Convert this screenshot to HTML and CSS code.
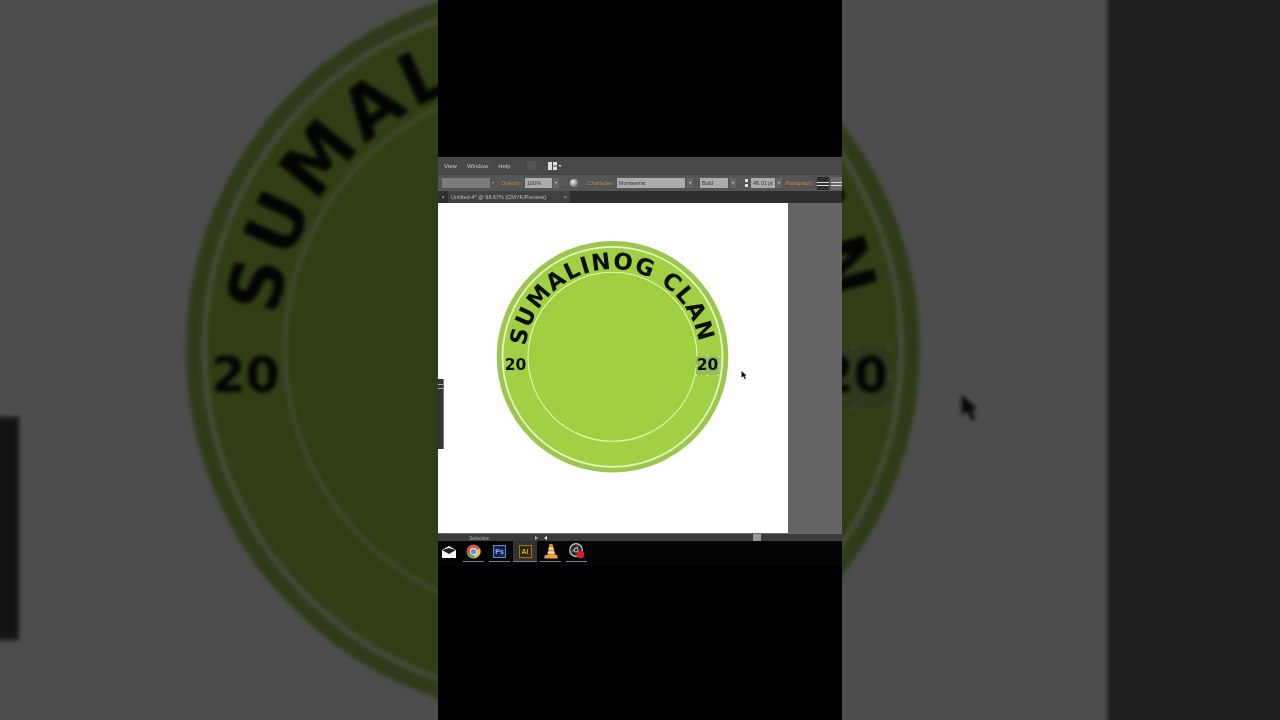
FILE: index.html

```html
<!DOCTYPE html>
<html>
<head>
<meta charset="utf-8">
<title>Sumalinog Clan logo</title>
<link rel="stylesheet" href="styles.css">
</head>
<body>

<!-- blurred, enlarged copy of the video behind it -->
<svg class="backdrop" viewBox="431.7 240.1 416.6 239.9" preserveAspectRatio="none">
  <rect x="430" y="240" width="357.5" height="240" fill="#fff"/>
  <rect x="787.5" y="240" width="62" height="240" fill="#646464"/>
  <rect x="430" y="378" width="14" height="70.500" fill="#434343"/>
  <use href="#art"/>
</svg>

<div class="frame">
  <div class="menubar">
    <span class="menu">View</span>
    <span class="menu">Window</span>
    <span class="menu">Help</span>
    <span class="ghost-btn"></span>
    <svg class="layout-icon" width="14" height="8" viewBox="0 0 14 8">
      <rect width="4" height="8" fill="#ddd"/>
      <rect x="5" width="4" height="3.500" fill="#ddd"/>
      <rect x="5" y="4.500" width="4" height="3.500" fill="#ddd"/>
      <path d="M10.500 3h3l-1.500 2z" fill="#ddd"/>
    </svg>
  </div>

  <div class="controlbar">
    <span class="field field-blank"></span>
    <span class="arrow arrow-dim"></span>
    <span class="label label-opacity">Opacity:</span>
    <span class="field field-opacity">100%</span>
    <span class="arrow"></span>
    <span class="globe"></span>
    <span class="label label-char">Character:</span>
    <span class="field field-font">Montserrat</span>
    <span class="arrow arrow-font"></span>
    <span class="field field-style">Bold</span>
    <span class="arrow arrow-style"></span>
    <span class="stepper"></span>
    <span class="field field-size">48.01 pt</span>
    <span class="arrow arrow-size"></span>
    <span class="label label-para">Paragraph:</span>
    <span class="align align-on"></span>
    <span class="align"></span>
  </div>

  <div class="tabbar">
    <span class="tab-x">&times;</span>
    <span class="tab">Untitled-4* @ 98.67% (CMYK/Preview)<span class="tab-close">&times;</span></span>
  </div>

  <div class="workspace">
    <div class="canvas">
      <svg class="art-svg" width="350" height="330" viewBox="438 203 350 330">
        <defs>
          <path id="arc" d="M525.65 346.1A87.500 87.500 0 0 1 698.7 341.6"/>
        </defs>
        <g id="art">
          <circle cx="612.5" cy="356.8" r="115.8" fill="#9cc650"/>
          <circle cx="612.5" cy="356.8" r="110" fill="#a2d045" stroke="#e6f5c4" stroke-width="1.800"/>
          <circle cx="612.5" cy="356.8" r="84.5" fill="#a0d042" stroke="#e4f6b8" stroke-width="1.100"/>
          <text class="arc-text"><textPath href="#arc" textLength="249">SUMALINOG CLAN</textPath></text>
          <rect x="696" y="356" width="23" height="19" fill="#95bb5e"/>
          <text class="year" x="515.5" y="370">20</text>
          <text class="year" x="707.5" y="370">20</text>
          <g fill="#e8f0dc">
            <circle cx="696.5" cy="356" r=".7"/><circle cx="707.5" cy="356" r=".7"/><circle cx="718.5" cy="356" r=".7"/>
            <circle cx="696.5" cy="365.5" r=".7"/><circle cx="718.5" cy="365.5" r=".7"/>
            <circle cx="696.5" cy="375" r=".7"/><circle cx="707.5" cy="375" r=".7"/><circle cx="718.5" cy="375" r=".7"/>
          </g>
          <path d="M741.5 371l5 4.400-2 .3 1.400 3-1.200.5-1.300-3-1.900 1.300z" fill="#111"/>
        </g>
      </svg>
      <div class="toolbox"><span></span><span></span></div>
    </div>
    <div class="pasteboard"></div>
  </div>

  <div class="statusbar">
    <span class="status-text">Selection</span>
    <span class="status-arrow status-arrow-r"></span>
    <span class="status-arrow status-arrow-l"></span>
    <span class="thumb"></span>
  </div>

  <div class="taskbar">
    <span class="task task-plain">
      <svg width="16" height="14" viewBox="0 0 16 14">
        <path d="M1 5L8 1l7 4v8H1z" fill="#fff"/>
        <path d="M1 5l7 4 7-4-7-2z" fill="#222"/>
      </svg>
    </span>
    <span class="task">
      <svg width="15" height="15" viewBox="0 0 16 16">
        <circle cx="8" cy="8" r="7.500" fill="#cf5a4c"/>
        <path d="M8 8L1.500 11.800A7.500 7.500 0 0 0 9 15.400z" fill="#62a763"/>
        <path d="M8 8l1 7.400A7.500 7.500 0 0 0 14.800 4.800z" fill="#e2c05a"/>
        <circle cx="8" cy="8" r="3.700" fill="#eee"/>
        <circle cx="8" cy="8" r="2.800" fill="#5f8fcf"/>
      </svg>
    </span>
    <span class="task"><span class="app-badge app-ps">Ps</span></span>
    <span class="task task-active"><span class="app-badge app-ai">Ai</span></span>
    <span class="task task-vlc">
      <svg width="14" height="16" viewBox="0 0 14 16">
        <path d="M5.500 1h3l3 11h-8z" fill="#ee8a1d"/>
        <path d="M4.900 4.500h4.200l.5 2h-5.200zM4 8.500h6l.5 2h-7z" fill="#f5e9d8"/>
        <path d="M1 12h12l1 3.500H0z" fill="#e8a24c"/>
      </svg>
    </span>
    <span class="task task-last">
      <svg width="16" height="16" viewBox="0 0 16 16">
        <circle cx="7" cy="7" r="6.300" fill="#2a2a2a" stroke="#ccc" stroke-width="1.200"/>
        <circle cx="7" cy="7" r="2" fill="none" stroke="#ccc"/>
        <path d="M2.500 9L6 6M8 3l1 2" stroke="#aaa"/>
        <circle cx="11.500" cy="11.500" r="3.800" fill="#d8202c"/>
      </svg>
    </span>
  </div>
</div>

</body>
</html>
```

FILE: styles.css

```css
html, body {
    margin: 0;
    height: 100%;
    overflow: hidden;
    background: #4d4d4d;
}

body {
    display: flex;
    justify-content: center;
    font-family: "Liberation Sans", Arial, sans-serif;
}

.backdrop {
    position: absolute;
    left: -20px;
    top: -20px;
    width: 1320px;
    height: 760px;
    filter: blur(2px) brightness(.3);
}

.frame {
    position: relative;
    width: 404px;
    height: 720px;
    padding-top: 157px;
    box-sizing: border-box;
    background: #000;
    display: flex;
    flex-direction: column;
}

/* top bars */
.menubar {
    height: 17px;
    background: #484848;
    display: flex;
    align-items: center;
    padding-left: 6px;
    color: #c4c4c4;
    font-size: 6px;
    gap: 10px;
    filter: blur(.6px);
}

.ghost-btn {
    width: 9px;
    height: 9px;
    margin-left: 6px;
    border-radius: 2px;
    background: #555;
}

.layout-icon {
    margin-left: 2px;
}

.controlbar {
    height: 17px;
    background: #555;
    border-top: 1px solid #414141;
    box-sizing: border-box;
    display: flex;
    align-items: center;
    padding-left: 4px;
    font-size: 5.500px;
    white-space: nowrap;
    filter: blur(.6px);
}

.field {
    height: 10px;
    line-height: 10px;
    background: #acacac;
    color: #333;
    padding-left: 2px;
    box-sizing: border-box;
    flex: none;
}

.field-blank { width: 48px; background: #7c7c7c; }
.field-opacity { width: 27px; margin-left: 3px; }
.field-font { width: 68px; margin-left: 3px; }
.field-style { width: 28px; margin-left: 7px; }
.field-size { width: 24px; margin-left: 3px; }

.arrow {
    width: 6px;
    height: 10px;
    flex: none;
    margin-left: 1px;
    background: #666;
    position: relative;
}

.arrow::after {
    content: "";
    position: absolute;
    left: 1.500px;
    top: 4px;
    border: 1.500px solid transparent;
    border-top: 2px solid #ddd;
    border-bottom: 0;
}

.arrow-dim { background: none; margin-left: 0; }
.arrow-dim::after { border-top-color: #999; }
.arrow-font { margin-left: 2px; }
.arrow-style { margin-left: 2px; }
.arrow-size { margin-left: 1px; }

.label {
    color: #b98a45;
    flex: none;
}

.label-opacity { margin-left: 5px; width: 21px; }
.label-char { margin-left: 10px; width: 26px; }
.label-para { margin-left: 4px; width: 27px; }

.globe {
    width: 8px;
    height: 8px;
    margin-left: 11px;
    border-radius: 50%;
    background: radial-gradient(circle at 35% 35%, #eee, #777 70%);
    flex: none;
}

.stepper {
    width: 3px;
    height: 8px;
    margin-left: 9px;
    background: linear-gradient(#ddd 40%, #555 40%, #555 60%, #ddd 60%);
    flex: none;
}

.align {
    width: 11px;
    height: 13px;
    margin-left: 2px;
    background: linear-gradient(#6a6a6a 35%, #ddd 35%, #ddd 45%, #6a6a6a 45%, #6a6a6a 60%, #ddd 60%, #ddd 70%, #6a6a6a 70%);
    flex: none;
}

.align-on {
    width: 12px;
    margin-left: 4px;
    background: linear-gradient(#2c2c2c 35%, #ddd 35%, #ddd 45%, #2c2c2c 45%, #2c2c2c 60%, #ddd 60%, #ddd 70%, #2c2c2c 70%);
}

.tabbar {
    height: 12px;
    background: #2e2e2e;
    display: flex;
    align-items: stretch;
    color: #bdbdbd;
    font-size: 5.500px;
    line-height: 12px;
    white-space: nowrap;
    filter: blur(.5px);
}

.tab-x {
    width: 10px;
    text-align: center;
}

.tab {
    width: 122px;
    box-sizing: border-box;
    padding-left: 3px;
    background: #424242;
    position: relative;
}

.tab-close {
    position: absolute;
    right: 3px;
    top: 0;
}

/* document area */
.workspace {
    height: 330px;
    display: flex;
}

.canvas {
    position: relative;
    width: 349.5px;
    background: #fff;
    overflow: hidden;
}

.art-svg {
    display: block;
    filter: blur(.4px);
}

.arc-text {
    font-family: "DejaVu Sans", sans-serif;
    font-weight: 700;
    font-size: 23px;
    fill: #0a0f06;
}

.year {
    font-family: "DejaVu Sans", sans-serif;
    font-weight: 700;
    font-size: 15.500px;
    fill: #0a0f06;
    text-anchor: middle;
}

.pasteboard {
    flex: 1;
    background: #646464;
}

.toolbox {
    position: absolute;
    left: 0;
    top: 176px;
    width: 6px;
    height: 70px;
    background: #333;
    border-right: 1px solid #777;
    box-sizing: border-box;
    padding-top: 5px;
}

.toolbox span {
    display: block;
    height: 1px;
    margin-bottom: 3px;
    background: #aaa;
}

/* bottom bars */
.statusbar {
    position: relative;
    height: 8px;
    background: #3b3b3b;
    color: #b0b0b0;
    font-size: 5px;
    line-height: 8px;
    padding-left: 31px;
    border-top: 1px solid #6a6a6a;
    box-sizing: border-box;
}

.status-text {
    filter: blur(.4px);
    display: inline-block;
}

.status-arrow {
    position: absolute;
    top: 1.500px;
    border: 2px solid transparent;
}

.status-arrow-r { left: 97px; border-left: 3px solid #bbb; border-right: 0; }
.status-arrow-l { left: 106px; border-right: 3px solid #eee; border-left: 0; }

.thumb {
    position: absolute;
    left: 315px;
    top: 0;
    width: 8px;
    height: 7px;
    background: #999;
}

.taskbar {
    height: 25px;
    background: #050505;
    display: flex;
    align-items: stretch;
    padding-left: 1px;
    filter: blur(.4px);
}

.task {
    width: 21px;
    margin-left: 5px;
    box-sizing: border-box;
    border-bottom: 1px solid #6f7f8c;
    margin-bottom: 4px;
    display: flex;
    align-items: center;
    justify-content: center;
}

.task-plain {
    border-bottom: 0;
    width: 19px;
    margin-left: 0;
}

.task-active {
    background: #333;
    width: 24px;
    margin-left: 3px;
}

.task-vlc {
    margin-left: 3px;
}

.task-last {
    margin-left: 5px;
}

.app-badge {
    width: 13px;
    height: 13px;
    box-sizing: border-box;
    font-size: 7px;
    line-height: 11px;
    text-align: center;
    font-weight: 700;
}

.app-ps {
    background: #14225a;
    border: 1px solid #6c85c4;
    color: #9db6ee;
}

.app-ai {
    background: #33270f;
    border: 1px solid #9c7426;
    color: #d9a441;
}
```
